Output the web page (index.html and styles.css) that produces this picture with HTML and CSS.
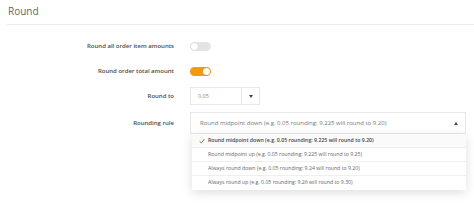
FILE: index.html
```html
<!DOCTYPE html>
<html lang="en">
<head>
  <meta charset="UTF-8">
  <meta name="viewport" content="width=device-width, initial-scale=1.0">
  <title>Round</title>
  <link rel="stylesheet" href="styles.css">
</head>
<body>

  <div class="panel">
    <div class="header">
      <h2>Round</h2>
    </div>

    <div class="form">
      <div class="row">
        <label>Round all order item amounts</label>
        <span class="switch"></span>
      </div>

      <div class="row">
        <label>Round order total amount</label>
        <span class="switch on"></span>
      </div>

      <div class="row">
        <label>Round to</label>
        <div class="combo">
          <span class="combo-value">0.05</span>
          <span class="combo-btn"><span class="caret-down"></span></span>
        </div>
      </div>

      <div class="row row-select">
        <label>Rounding rule</label>
        <div class="select">
          <div class="select-value">
            <span>Round midpoint down (e.g. 0.05 rounding: 9.225 will round to 9.20)</span>
            <span class="caret-up"></span>
          </div>
          <ul class="menu">
            <li class="selected">
              <svg class="check" viewBox="0 0 10 10" width="6" height="6"><path d="M1 5.5 L4 8.2 L9 1.8" fill="none" stroke="#4a8a3a" stroke-width="1.6"/></svg>
              Round midpoint down (e.g. 0.05 rounding: 9.225 will round to 9.20)
            </li>
            <li>Round midpoint up (e.g. 0.05 rounding: 9.225 will round to 9.25)</li>
            <li>Always round down (e.g. 0.05 rounding: 9.24 will round to 9.20)</li>
            <li>Always round up (e.g. 0.05 rounding: 9.26 will round to 9.30)</li>
          </ul>
        </div>
      </div>
    </div>
  </div>

</body>
</html>
```

FILE: styles.css
```css
* {
  font-family: 'Open Sans', sans-serif;
  box-sizing: border-box;
}

body {
  margin: 0;
  min-height: 220px;
  background-color: #ffffff;
}

.panel {
  min-height: 220px;
}

/* Section header with underline */
.header {
  margin-left: 7px;
  height: 25px;
  border-bottom: 1px solid #ececec;
}

.header h2 {
  margin: 0;
  padding: 3px 0 0 1px;
  font-size: 10px;
  font-weight: 400;
  line-height: 16px;
  color: #666;
}

.form {
  padding-top: 12px;
}

.row {
  display: grid;
  grid-template-columns: 174px 1fr;
  column-gap: 16px;
  align-items: center;
  height: 18px;
  margin-bottom: 7px;
}

.row-select {
  height: 22px;
}

label {
  text-align: right;
  font-size: 6px;
  font-weight: 600;
  color: #4a4a4a;
}

/* Toggle switches */
.switch {
  position: relative;
  display: block;
  width: 21px;
  height: 9px;
  border-radius: 5px;
  background: #e4e4e8;
}

.switch::after {
  content: "";
  position: absolute;
  top: 1px;
  left: 1px;
  width: 7px;
  height: 7px;
  border-radius: 50%;
  background: #fff;
  box-shadow: 0 0 1px rgba(0, 0, 0, 0.2);
}

.switch.on {
  background: #f29a10;
}

.switch.on::after {
  left: 13px;
}

/* Round to combo */
.combo {
  display: flex;
  width: 70px;
  height: 18px;
  border: 1px solid #e8e8e8;
}

.combo-value {
  flex: 1;
  padding-left: 7px;
  font-size: 5.5px;
  line-height: 16px;
  color: #888;
}

.combo-btn {
  width: 18px;
  border-left: 1px solid #e8e8e8;
  display: flex;
  align-items: center;
  justify-content: center;
}

.caret-down {
  border-left: 2.5px solid transparent;
  border-right: 2.5px solid transparent;
  border-top: 3px solid #444;
}

.caret-up {
  border-left: 2.5px solid transparent;
  border-right: 2.5px solid transparent;
  border-bottom: 3px solid #444;
}

/* Rounding rule select with open menu */
.select {
  position: relative;
  width: 276px;
}

.select-value {
  display: flex;
  justify-content: space-between;
  align-items: center;
  height: 22px;
  padding: 0 7px 0 9px;
  border: 1px solid #e8e8e8;
  font-size: 6px;
  color: #777;
}

.menu {
  position: absolute;
  top: 100%;
  left: 2px;
  z-index: 2;
  width: 274px;
  margin: 0;
  padding: 0;
  list-style: none;
  background: #fff;
  box-shadow: 0 3px 10px rgba(0, 0, 0, 0.13);
}

.menu li {
  position: relative;
  height: 14px;
  line-height: 13px;
  padding-left: 16px;
  border-bottom: 1px solid #efefef;
  font-size: 5.2px;
  color: #666;
}

.menu li.selected {
  background: #fafafa;
  font-weight: 600;
  color: #444;
}

.menu li:last-child {
  border-bottom: none;
}

.check {
  position: absolute;
  left: 7px;
  top: 4px;
}
```
